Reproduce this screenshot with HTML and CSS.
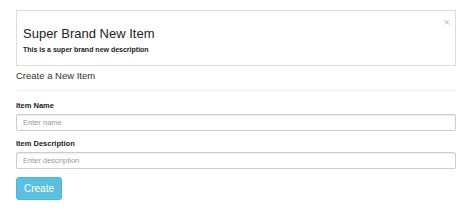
FILE: index.html
```
<!DOCTYPE html>
<html>
<head>
    <link rel="stylesheet" href="styles.css">
</head>
<body>
    <div class="container">
        <!-- Newest item -->
        <div class="item-card">
            <button class="close">&times;</button>
            <h2 class="item-title">Super Brand New Item</h2>
            <p class="item-desc">This is a super brand new description</p>
        </div>

        <!-- Form -->
        <h3 class="form-title">Create a New Item</h3>
        <hr>
        <form>
            <div class="form-group">
                <label for="name">Item Name</label>
                <input type="text" id="name" placeholder="Enter name">
            </div>
            <div class="form-group">
                <label for="desc">Item Description</label>
                <input type="text" id="desc" placeholder="Enter description">
            </div>
            <button type="button" class="btn-create">Create</button>
        </form>
    </div>
</body>
</html>
```

FILE: styles.css
```
body {
    margin: 0;
    font-family: "Liberation Sans", Arial, sans-serif;
    color: #333;
    background: #fff;
}

.container {
    width: 440px;
    margin-left: 16px;
    padding-top: 10px;
}

/* Item card */
.item-card {
    position: relative;
    border: 1px solid #ddd;
    height: 54px;
    padding: 0 6px;
}
.item-title {
    margin: 16px 0 0;
    font-size: 13px;
    font-weight: normal;
    line-height: 14px;
    color: #222;
}
.item-desc {
    margin: 4px 0 0;
    font-size: 7px;
    font-weight: bold;
    line-height: 9px;
    color: #222;
}
.close {
    position: absolute;
    top: 5px;
    right: 5px;
    border: none;
    background: none;
    padding: 0;
    font-size: 11px;
    line-height: 12px;
    color: #bbb;
    cursor: pointer;
}

/* Form */
.form-title {
    margin: 4px 0 0;
    font-size: 9.5px;
    font-weight: normal;
    line-height: 12px;
    color: #333;
}
hr {
    margin: 8px 0 0;
    border: none;
    border-top: 1px solid #eee;
}
.form-group {
    margin-bottom: 8px;
}
.form-group:first-child {
    margin-top: 10px;
}
label {
    display: block;
    font-size: 7.5px;
    font-weight: bold;
    line-height: 10px;
    margin-bottom: 3px;
    color: #222;
}
input {
    display: block;
    box-sizing: border-box;
    width: 100%;
    height: 17px;
    padding: 0 6px;
    border: 1px solid #ccc;
    border-radius: 2px;
    font-family: "Liberation Sans", Arial, sans-serif;
    font-size: 7.5px;
    box-shadow: inset 0 1px 1px rgba(0, 0, 0, 0.075);
}
input::placeholder {
    color: #999;
}
.btn-create {
    width: 46px;
    height: 23px;
    padding: 0;
    border: 1px solid #46b8da;
    border-radius: 3px;
    background: #5bc0de;
    color: #fff;
    font-family: "Liberation Sans", Arial, sans-serif;
    font-size: 10px;
    cursor: pointer;
}
```
